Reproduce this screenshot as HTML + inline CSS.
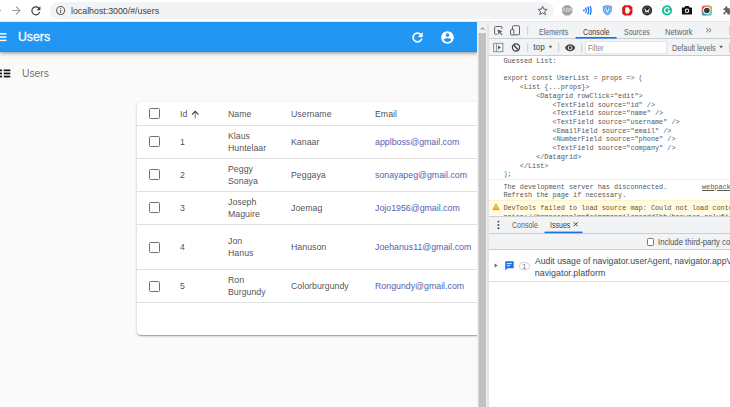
<!DOCTYPE html>
<html><head><meta charset="utf-8">
<style>
*{box-sizing:border-box;margin:0;padding:0}
html,body{width:730px;height:407px;overflow:hidden;background:#fff;font-family:"Liberation Sans",sans-serif;position:relative}
.a{position:absolute}
.s{font-family:"Liberation Sans",sans-serif;white-space:nowrap}
.m{font-family:"Liberation Mono",monospace;white-space:nowrap}
/* browser toolbar */
#toolbar{left:0;top:0;width:730px;height:22px;background:#fff;border-bottom:1px solid #e6e6e6}
#url{left:50px;top:2px;width:504px;height:17px;background:#f1f3f4;border-radius:9px}
/* page */
#page{left:0;top:22px;width:478px;height:385px;background:#fafafa;overflow:hidden}
#appbar{left:0;top:0;width:478px;height:30px;background:#2196f3;border-bottom:1px solid #1590f0;box-shadow:0 1px 3px rgba(0,0,0,.3),0 3px 4px rgba(0,0,0,.1)}
#card{left:137px;top:80px;width:420px;height:233px;background:#fff;border-radius:4px;box-shadow:0 1px 3px 0 rgba(0,0,0,.2),0 1px 1px 0 rgba(0,0,0,.14),0 2px 1px -1px rgba(0,0,0,.12)}
.cb{position:absolute;left:12px;margin-top:0;width:11px;height:11px;border:1.7px solid #707070;border-radius:1.5px}
.hr{position:absolute;left:0;width:420px;height:1px;background:#e0e0e0}
.t{position:absolute;font-size:8.8px;color:rgba(0,0,0,.72);white-space:nowrap;line-height:12px}
.e{color:#5362b4}
/* scrollbar */
#sb{left:477px;top:22px;width:10px;height:385px;background:#f1f1f1}
#sbthumb{left:478px;top:33px;width:8px;height:374px;background:#c1c1c1;border-left:1px solid #d9d9d9}
#split{left:487px;top:22px;width:2px;height:385px;background:#e3e4e6;z-index:5}
/* devtools */
#dev{left:488px;top:22px;width:242px;height:385px;background:#fff;overflow:hidden}
.tb{background:#f1f3f4;border-bottom:1px solid #cacdd1}
.dt{font-size:8px;color:#5f6368;line-height:10px;transform:scale(.88,1.1);transform-origin:0 0}
.code{font-size:6.84px;line-height:8.72px;color:#53575c;white-space:pre}
</style></head><body>
<!-- browser toolbar -->
<div id="toolbar" class="a"></div>
<svg class="a" style="left:0;top:0" width="50" height="22" viewBox="0 0 50 22">
  <path d="M-2 10.5 H1" stroke="#9aa0a6" stroke-width="1.1" fill="none"/>
  <path d="M12 10.5 H20 M15.9 6.4 L20 10.5 L15.9 14.6" stroke="#9aa0a6" stroke-width="1.1" fill="none"/>
</svg>
<svg class="a" style="left:29.3px;top:4.3px" width="13.7" height="13.7" viewBox="0 0 24 24">
  <path fill="#3c4043" d="M17.65 6.35C16.2 4.9 14.21 4 12 4c-4.42 0-7.99 3.58-7.99 8s3.57 8 7.99 8c3.73 0 6.84-2.55 7.73-6h-2.08c-.82 2.33-3.04 4-5.65 4-3.31 0-6-2.69-6-6s2.69-6 6-6c1.66 0 3.14.69 4.22 1.78L13 11h7V4l-2.35 2.35z"/>
</svg>
<div id="url" class="a"></div>
<svg class="a" style="left:55px;top:5px" width="12" height="12" viewBox="0 0 12 12">
  <circle cx="5.6" cy="5.5" r="4" stroke="#5f6368" stroke-width="1.1" fill="none"/>
  <path d="M5.6 4.8 V8" stroke="#5f6368" stroke-width="1.1"/><circle cx="5.6" cy="3.3" r=".6" fill="#5f6368"/>
</svg>
<div class="a s" style="left:71px;top:5px;font-size:8.8px;line-height:12px;color:#3c4043">localhost:3000/#/users</div>
<svg class="a" style="left:530px;top:0" width="200" height="22" viewBox="530 0 200 22">
  <path d="M542.6 6.2 L543.9 9.2 L547.1 9.4 L544.6 11.5 L545.5 14.6 L542.6 12.9 L539.7 14.6 L540.6 11.5 L538.1 9.4 L541.3 9.2 Z" fill="none" stroke="#5f6368" stroke-width="1" stroke-linejoin="round"/>
  <path d="M565 5.3 H569.4 L572.4 8.3 V12.6 L569.4 15.6 H565 L562 12.6 V8.3 Z" fill="#a3a3a3"/>
  <text x="567.2" y="12.2" font-family="Liberation Sans" font-size="4.6" font-weight="bold" fill="#d8d8d8" text-anchor="middle">ABP</text>
  <circle cx="583.9" cy="10.4" r="0.9" fill="#1a73e8"/>
  <path d="M585.6 7.6 Q587 10.4 585.6 13.2 M587.8 6.6 Q589.6 10.4 587.8 14.2 M590 6 Q592.2 10.4 590 14.8" stroke="#1a73e8" stroke-width="1.3" fill="none"/>
  <path d="M602.7 6.5 Q607.4 4.2 612.1 6.5 L611.6 11.3 Q610.5 14.3 607.4 15.6 Q604.3 14.3 603.2 11.3 Z" fill="#4d9be0"/>
  <path d="M604.3 7.4 Q607.4 5.9 610.5 7.4 L610.1 11 Q609.3 13.2 607.4 14.1 Q605.5 13.2 604.7 11 Z" fill="none" stroke="#cfe5f8" stroke-width=".6"/>
  <path d="M605.7 8.3 L607.4 12.3 L609.1 8.3" stroke="#fff" stroke-width="1" fill="none"/>
  <path d="M624.3 5.3 H630.3 L632.4 7.4 V13.5 L630.3 15.6 H624.3 L622.2 13.5 V7.4 Z" fill="#e3151b"/>
  <path d="M625.2 9.5 V8 Q625.2 7.3 625.9 7.3 Q626.5 7.3 626.5 8 V7.5 Q626.5 6.8 627.2 6.8 Q627.8 6.8 627.8 7.5 V8.3 Q627.8 7.6 628.5 7.6 Q629.1 7.6 629.1 8.3 V10 L629.8 9.3 Q630.4 9 630.6 9.5 L629.2 12.6 Q628.6 13.8 627.3 13.8 Q625.2 13.8 625.2 12 Z" fill="#fff"/>
  <circle cx="647.1" cy="10.4" r="5" fill="#1e1e1e"/>
  <circle cx="647.1" cy="10.4" r="3.6" fill="none" stroke="#6b6b6b" stroke-width=".8"/>
  <path d="M645 8.6 L646.1 12.3 L647.1 10.3 L648.1 12.3 L649.2 8.6" stroke="#fff" stroke-width="1" fill="none"/>
  <circle cx="667" cy="10.45" r="5.1" fill="#15c39a"/>
  <path d="M669.1 8.6 A2.6 2.6 0 1 0 669.6 11.2 L668.1 10.6" stroke="#fff" stroke-width="1.3" fill="none"/>
  <path d="M681.9 8 Q681.9 7.6 682.3 7.6 H684.3 L685.4 6.1 H688.6 L689.7 7.6 H691.6 Q692 7.6 692 8 V14 Q692 14.4 691.6 14.4 H682.3 Q681.9 14.4 681.9 14 Z" fill="#111"/>
  <circle cx="687" cy="10.8" r="2.2" fill="#fff"/><circle cx="687" cy="10.8" r="1.2" fill="#111"/>
  <defs><linearGradient id="rb" x1="0" y1="0" x2="1" y2="1"><stop offset="0" stop-color="#ff2d55"/><stop offset=".35" stop-color="#ff9500"/><stop offset=".6" stop-color="#4cd964"/><stop offset="1" stop-color="#5ac8fa"/></linearGradient>
  <linearGradient id="rb2" x1="1" y1="0" x2="0" y2="1"><stop offset="0" stop-color="#ffcc00" stop-opacity=".9"/><stop offset=".5" stop-color="#af52de" stop-opacity="0"/><stop offset="1" stop-color="#007aff" stop-opacity=".9"/></linearGradient></defs>
  <rect x="701.8" y="5.4" width="10.1" height="10.2" rx="2.6" fill="url(#rb)"/>
  <rect x="701.8" y="5.4" width="10.1" height="10.2" rx="2.6" fill="url(#rb2)"/>
  <circle cx="706.85" cy="10.5" r="3.7" fill="#fff"/>
  <circle cx="706.85" cy="10.5" r="2.8" fill="#2d3a4a"/>
  <path d="M723.5 8.2 H725.2 V7.3 A1.1 1.1 0 0 1 727.4 7.3 V8.2 H729.8 V10.2 H730.6 A1.1 1.1 0 0 1 730.6 12.4 H729.8 V14.4 H727.4 V13.7 A1.1 1.1 0 0 0 725.2 13.7 V14.4 H723.5 V12.3 H724.2 A1.1 1.1 0 0 0 724.2 10.1 H723.5 Z" fill="#5f6368"/>
</svg>

<!-- page -->
<div id="page" class="a">
  <div id="appbar" class="a"></div>
  <svg class="a" style="left:0;top:10px" width="8" height="10" viewBox="0 0 8 10">
    <rect x="0" y="1.05" width="6.4" height="1.5" fill="#fff"/><rect x="0" y="4.35" width="6.4" height="1.5" fill="#fff"/><rect x="0" y="7.65" width="6.4" height="1.5" fill="#fff"/>
  </svg>
  <div class="a s" style="left:17.8px;top:6.2px;font-size:13px;line-height:18px;color:#fff;transform:scaleX(.945);transform-origin:0 0;-webkit-text-stroke:.3px #fff">Users</div>
  <svg class="a" style="left:409.8px;top:8px" width="15" height="15" viewBox="0 0 24 24">
    <path fill="#fff" d="M17.65 6.35C16.2 4.9 14.21 4 12 4c-4.42 0-7.99 3.58-7.99 8s3.57 8 7.99 8c3.73 0 6.84-2.550 7.730-6h-2.08c-.82 2.33-3.04 4-5.650 4-3.310 0-6-2.690-6-6s2.690-6 6-6c1.660 0 3.140.690 4.220 1.780L13 11h7V4l-2.35 2.35z" stroke="#fff" stroke-width=".6"/>
  </svg>
  <svg class="a" style="left:440px;top:8px" width="15" height="15" viewBox="0 0 24 24">
    <path fill="#fff" d="M12 2C6.48 2 2 6.48 2 12s4.48 10 10 10 10-4.48 10-10S17.52 2 12 2zm0 3c1.66 0 3 1.34 3 3s-1.34 3-3 3-3-1.34-3-3 1.34-3 3-3zm0 14.2c-2.5 0-4.71-1.28-6-3.22.03-1.99 4-3.08 6-3.08 1.99 0 5.970 1.090 6 3.080-1.290 1.940-3.500 3.220-6 3.220z"/>
  </svg>
  <svg class="a" style="left:0;top:46px" width="12" height="10" viewBox="0 0 12 10">
    <rect x="0" y="1.5" width="2" height="1.7" fill="#111"/><rect x="3.7" y="1.5" width="6.6" height="1.7" fill="#111"/>
    <rect x="0" y="4.6" width="2" height="1.7" fill="#111"/><rect x="3.7" y="4.6" width="6.6" height="1.7" fill="#111"/>
    <rect x="0" y="7.7" width="2" height="1.7" fill="#111"/><rect x="3.7" y="7.7" width="6.6" height="1.7" fill="#111"/>
  </svg>
  <div class="a s" style="left:22px;top:44.5px;font-size:10.3px;line-height:14px;color:rgba(0,0,0,.6)">Users</div>

  <div id="card" class="a">
    <!-- header: card top page-y 80 => abs 102 -->
    <div class="cb" style="top:6px"></div>
    <div class="t" style="left:43px;top:6px">Id</div>
    <svg class="a" style="left:54px;top:8px" width="9" height="9" viewBox="0 0 9 9"><path d="M4.2 8.4 V1.6" stroke="rgba(0,0,0,.55)" stroke-width="1" fill="none"/><path d="M1 4.5 L4.2 1.3 L7.4 4.5" stroke="rgba(0,0,0,.72)" stroke-width="1.1" fill="none"/></svg>
    <div class="t" style="left:91px;top:6px">Name</div>
    <div class="t" style="left:154px;top:6px">Username</div>
    <div class="t" style="left:238px;top:6px">Email</div>
    <div class="hr" style="top:23px"></div>
    <!-- row1 24..56 -->
    <div class="cb" style="top:34px"></div>
    <div class="t" style="left:43px;top:34px">1</div>
    <div class="t" style="left:91px;top:28px">Klaus<br>Huntelaar</div>
    <div class="t" style="left:154px;top:34px">Kanaar</div>
    <div class="t e" style="left:238px;top:34px">applboss@gmail.com</div>
    <div class="hr" style="top:56px"></div>
    <div class="cb" style="top:67px"></div>
    <div class="t" style="left:43px;top:67px">2</div>
    <div class="t" style="left:91px;top:61px">Peggy<br>Sonaya</div>
    <div class="t" style="left:154px;top:67px">Peggaya</div>
    <div class="t e" style="left:238px;top:67px">sonayapeg@gmail.com</div>
    <div class="hr" style="top:89px"></div>
    <div class="cb" style="top:100px"></div>
    <div class="t" style="left:43px;top:100px">3</div>
    <div class="t" style="left:91px;top:94px">Joseph<br>Maguire</div>
    <div class="t" style="left:154px;top:100px">Joemag</div>
    <div class="t e" style="left:238px;top:100px">Jojo1956@gmail.com</div>
    <div class="hr" style="top:122px"></div>
    <div class="cb" style="top:139.5px"></div>
    <div class="t" style="left:43px;top:139px">4</div>
    <div class="t" style="left:91px;top:133px">Jon<br>Hanus</div>
    <div class="t" style="left:154px;top:139px">Hanuson</div>
    <div class="t e" style="left:238px;top:139px">Joehanus11@gmail.com</div>
    <div class="hr" style="top:167px"></div>
    <div class="cb" style="top:179px"></div>
    <div class="t" style="left:43px;top:178px">5</div>
    <div class="t" style="left:91px;top:172px">Ron<br>Burgundy</div>
    <div class="t" style="left:154px;top:178px">Colorburgundy</div>
    <div class="t e" style="left:238px;top:178px">Rongundy@gmail.com</div>
    <div class="hr" style="top:200px"></div>
  </div>
</div>
<div id="sb" class="a"></div>
<div id="sbthumb" class="a"></div>
<svg class="a" style="left:478px;top:25px" width="9" height="6" viewBox="0 0 9 6"><path d="M2 4.5 L4.5 2 L7 4.5 Z" fill="#a3a3a3"/></svg>
<div id="split" class="a"></div>

<!-- devtools -->
<div id="dev" class="a">
  <!-- toolbar row 1: abs y 22..38 -->
  <div class="a tb" style="left:0;top:0;width:242px;height:17px"></div>
  <div class="a tb" style="left:0;top:17px;width:242px;height:17px"></div>
  <svg class="a" style="left:0;top:0" width="242" height="34" viewBox="0 0 242 34">
    <path d="M9.2 12.3 H7.4 Q6.6 12.3 6.6 11.5 V5.3 Q6.6 4.5 7.4 4.5 H13.2 Q14 4.5 14 5.3 V7.2" stroke="#5f6368" stroke-width="1" fill="none"/>
    <path d="M9.5 7.5 L14.5 9.3 L12.4 10.3 L14.6 12.5 L13.7 13.3 L11.5 11.1 L10.6 13.1 Z" fill="#5f6368"/>
    <rect x="24.5" y="3.8" width="7" height="9" rx=".8" stroke="#5f6368" stroke-width="1" fill="none"/>
    <rect x="22.6" y="7.5" width="3.2" height="5.5" rx=".6" stroke="#5f6368" stroke-width="1" fill="#f1f3f4"/>
    <rect x="39.2" y="4" width="1" height="9" fill="#cacdd1"/>
    <rect x="87.6" y="15" width="41" height="1.6" fill="#1a73e8"/>
    <path d="M218.2 6.2 L220.4 8.2 L218.2 10.2 M220.9 6.2 L223.1 8.2 L220.9 10.2" stroke="#5f6368" stroke-width=".9" fill="none"/>
    <rect x="241.2" y="4" width="1" height="9" fill="#cacdd1"/>
    <!-- row 2 -->
    <rect x="5.7" y="21.3" width="9.2" height="8.4" stroke="#80868b" stroke-width=".9" fill="none"/>
    <rect x="8" y="21.3" width=".8" height="8.4" fill="#80868b"/>
    <path d="M10.2 23.4 L12.6 25.5 L10.2 27.6 Z" fill="#3c4043"/>
    <circle cx="28" cy="25.5" r="3.6" stroke="#3c4043" stroke-width="1.2" fill="none"/>
    <path d="M25.5 23 L30.5 28" stroke="#3c4043" stroke-width="1.2"/>
    <rect x="39.2" y="21" width="1" height="9" fill="#cacdd1"/>
    <path d="M60.7 23.8 H64.3 L62.5 26.6 Z" fill="#5f6368"/>
    <rect x="70.2" y="21" width="1" height="9" fill="#cacdd1"/>
    <g transform="translate(76.6 20.2) scale(.46)"><path fill="#3c4043" d="M12 4.5C7 4.5 2.73 7.61 1 12c1.730 4.390 6 7.500 11 7.500s9.270-3.110 11-7.500c-1.730-4.390-6-7.500-11-7.500zM12 17c-2.760 0-5-2.240-5-5s2.240-5 5-5 5 2.240 5 5-2.240 5-5 5zm0-8c-1.660 0-3 1.340-3 3s1.340 3 3 3 3-1.340 3-3-1.340-3-3-3z"/></g>
    <rect x="93.2" y="21" width="1" height="9" fill="#cacdd1"/>
    <rect x="97.4" y="19.6" width="81.3" height="12.2" fill="#fff" stroke="#dadce0" stroke-width=".8"/>
    <path d="M231.3 23.8 H234.9 L233.1 26.6 Z" fill="#5f6368"/>
    <rect x="241" y="21" width="1" height="9" fill="#cacdd1"/>
  </svg>
  <div class="a s dt" style="left:50.7px;top:4.6px">Elements</div>
  <div class="a s dt" style="left:94.6px;top:4.6px;color:#3c4043;transform:scale(.905,1.1)">Console</div>
  <div class="a s dt" style="left:135.8px;top:4.6px">Sources</div>
  <div class="a s dt" style="left:176.6px;top:4.6px;transform:scale(.94,1.1)">Network</div>
  <div class="a s dt" style="left:45.3px;top:21.2px;transform:scaleY(1.05);font-size:8.2px;color:#3c4043">top</div>
  <div class="a s dt" style="left:100.3px;top:20.8px;color:#80868b">Filter</div>
  <div class="a s dt" style="left:183.8px;top:20.8px;transform:scale(.91,1.1)">Default levels</div>

  <div class="a m code" style="left:15.4px;top:35px">Guessed List:<br><br>export const UserList = props =&gt; (<br>    &lt;List {...props}&gt;<br>        &lt;Datagrid rowClick="edit"&gt;<br>            &lt;TextField source="id" /&gt;<br>            &lt;TextField source="name" /&gt;<br>            &lt;TextField source="username" /&gt;<br>            &lt;EmailField source="email" /&gt;<br>            &lt;NumberField source="phone" /&gt;<br>            &lt;TextField source="company" /&gt;<br>        &lt;/Datagrid&gt;<br>    &lt;/List&gt;<br>);</div>
  <div class="a" style="left:0;top:157px;width:242px;height:1px;background:#f0f0f0"></div>
  <div class="a m code" style="left:15.4px;top:160.5px">The development server has disconnected.<br>Refresh the page if necessary.</div>
  <div class="a m code" style="left:214px;top:160.5px;text-decoration:underline">webpack</div>
  <!-- warning -->
  <div class="a" style="left:0;top:178px;width:242px;height:17px;background:#fffbe5;border-top:1px solid #fff5c2;overflow:hidden">
    <div class="a m code" style="left:15.4px;top:2.8px;color:#6e5525">DevTools failed to load source map: Could not load content for<br>nsion://hnmpcagpplmpfojmgmnngilcnanddlhb/browser-polyfill.js.map</div>
  </div>
  <svg class="a" style="left:4px;top:181px" width="8" height="8" viewBox="0 0 8 8"><path d="M4 0.6 L7.5 6.9 H0.5 Z" fill="#f0a30a" stroke="#f0a30a" stroke-width=".4" stroke-linejoin="round"/><path d="M4 2.7 V4.9 M4 5.6 V6.2" stroke="#fff" stroke-width=".8"/></svg>
  <!-- drawer -->
  <div class="a tb" style="left:0;top:194px;width:242px;height:18px;border-top:1px solid #cacdd1"></div>
  <svg class="a" style="left:0;top:194px" width="242" height="18" viewBox="0 0 242 18">
    <circle cx="10.4" cy="5.6" r=".95" fill="#3c4043"/><circle cx="10.4" cy="8.9" r=".95" fill="#3c4043"/><circle cx="10.4" cy="12.2" r=".95" fill="#3c4043"/>
    <path d="M85.7 6.3 L89.7 10.3 M89.7 6.3 L85.7 10.3" stroke="#3c4043" stroke-width="1"/>
    <rect x="56.5" y="15.6" width="38" height="1.6" fill="#1a73e8"/>
  </svg>
  <div class="a s dt" style="left:23.8px;top:198px">Console</div>
  <div class="a s dt" style="left:62.3px;top:198px;color:#3c4043">Issues</div>
  <!-- issues toolbar -->
  <div class="a tb" style="left:0;top:212px;width:242px;height:16px"></div>
  <div class="a" style="left:158.5px;top:216px;width:7.5px;height:7.5px;border:1px solid #767676;border-radius:1.5px;background:#fff"></div>
  <div class="a s" style="left:170px;top:214.5px;font-size:8.6px;line-height:11px;color:#4d5156;transform:scaleX(.9);transform-origin:0 0">Include third-party cookie issues</div>
  <!-- issue row -->
  <svg class="a" style="left:0;top:236px" width="60" height="16" viewBox="0 0 60 16">
    <path d="M6.6 5.6 L9.6 7.6 L6.6 9.6 Z" fill="#5f6368"/>
    <path d="M17.2 3.3 H25.7 V10.3 H19.6 L17.2 12.2 Z" fill="#1a73e8"/>
    <rect x="18.8" y="5.2" width="5" height=".9" fill="#fff"/><rect x="18.8" y="7.3" width="3.4" height=".9" fill="#fff"/>
    <rect x="31.4" y="4.6" width="10.2" height="7.3" rx="3.65" fill="#fff" stroke="#c4c7cb" stroke-width=".8"/>
  </svg>
  <div class="a s" style="left:34.6px;top:241px;font-size:6.4px;line-height:7px;color:#5f6368">1</div>
  <div class="a s" style="left:46.8px;top:234px;font-size:8.9px;line-height:11.7px;color:#45494e;transform:scaleX(.975);transform-origin:0 0">Audit usage of navigator.userAgent, navigator.appVersion, and</div>
  <div class="a s" style="left:46.8px;top:245.7px;font-size:8.9px;line-height:11.7px;color:#45494e">navigator.platform</div>
  <div class="a" style="left:0;top:259px;width:242px;height:1px;background:#e0e0e0"></div>
</div>
</body></html>
